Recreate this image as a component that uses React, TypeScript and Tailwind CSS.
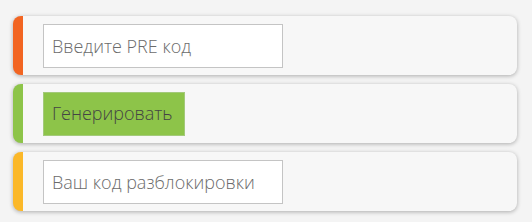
const font = { fontFamily: '"Open Sans", "Noto Sans", sans-serif' };

function Card({ color, children }: { color: string; children: React.ReactNode }) {
  return (
    <div className={`flex h-[59px] items-center rounded-lg border-l-[10px] ${color} bg-[#f7f7f7] pl-5 shadow-[0_1px_4px_rgba(0,0,0,0.3)]`}>
      {children}
    </div>
  );
}

export default function App() {
  return (
    <div className="h-[222px] w-[532px] bg-[#f4f4f4] pl-[13px] pr-[15px] pt-4" style={font}>
      <div className="flex flex-col gap-[9px]">
        <Card color="border-[#f26522]">
          <input
            placeholder="Введите PRE код"
            className="h-11 w-60 border border-[#c4c4c4] bg-white px-2 text-[18px] font-light text-[#555] placeholder:text-[#6b6b6b] outline-none"
          />
        </Card>
        <Card color="border-[#8dc449]">
          <button className="h-11 w-[142px] border border-[#a3c97a] bg-[#8dc449] text-left pl-2 text-[18px] font-light text-[#444]">
            Генерировать
          </button>
        </Card>
        <Card color="border-[#fbb829]">
          <input
            placeholder="Ваш код разблокировки"
            className="h-11 w-60 border border-[#c4c4c4] bg-white px-2 text-[18px] font-light text-[#555] placeholder:text-[#6b6b6b] outline-none"
          />
        </Card>
      </div>
    </div>
  );
}
